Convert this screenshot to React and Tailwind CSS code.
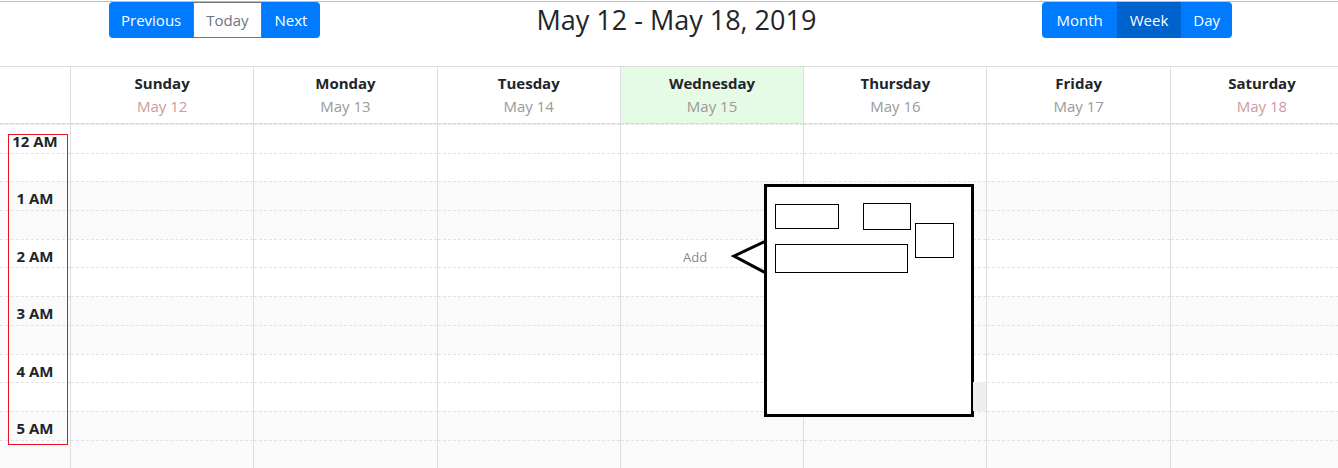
import React from "react";

const DAYS = [
  { name: "Sunday", date: "May 12", weekend: true },
  { name: "Monday", date: "May 13" },
  { name: "Tuesday", date: "May 14" },
  { name: "Wednesday", date: "May 15", today: true },
  { name: "Thursday", date: "May 16" },
  { name: "Friday", date: "May 17" },
  { name: "Saturday", date: "May 18", weekend: true },
];

const HOURS = ["12 AM", "1 AM", "2 AM", "3 AM", "4 AM", "5 AM"];

const COLS = "grid grid-cols-[70px_repeat(7,183.3px)]";

function Toolbar() {
  return (
    <div className="flex h-[64px] items-start pl-[109px] pr-[106px]">
      <div className="flex h-9 overflow-hidden rounded text-[15px]">
        <button className="bg-[#007bff] px-3 text-white">Previous</button>
        <button className="border border-[#6c757d] bg-white px-3 text-[#6c757d]">Today</button>
        <button className="bg-[#007bff] px-[13px] text-white">Next</button>
      </div>
      <h1 className="ml-[216px] h-9 text-[27px] leading-9 text-[#212529]">May 12 - May 18, 2019</h1>
      <div className="ml-auto flex h-9 overflow-hidden rounded text-[15px] text-white">
        <button className="bg-[#007bff] px-[14px]">Month</button>
        <button className="bg-[#0062cc] px-[13px]">Week</button>
        <button className="bg-[#007bff] px-3">Day</button>
      </div>
    </div>
  );
}

function DayHeader() {
  return (
    <div className={`${COLS} h-[58px] border-y border-[#dddddd]`}>
      <div />
      {DAYS.map((d) => (
        <div
          key={d.name}
          className={`flex flex-col items-center border-l border-[#dddddd] pt-[6px] ${d.today ? "bg-[#e6fbe6]" : ""}`}
        >
          <div className="text-[15px] font-bold leading-5 text-[#212529]">{d.name}</div>
          <div className={`mt-[3px] text-[15px] leading-5 ${d.weekend ? "text-[#cc9a9e]" : "text-[#9a9a9a]"}`}>{d.date}</div>
        </div>
      ))}
    </div>
  );
}

function HourRow({ label, i }) {
  const bg = i % 2 === 1 ? "bg-[#fafafa]" : "bg-white";
  return (
    <div className={`${COLS} h-[57.4px] ${bg}`}>
      <div className="flex flex-col">
        <div className="h-1/2 border-t border-dashed border-[#e2e2e2] pt-[6px] text-center text-[15px] font-bold leading-5 text-[#212529]">
          {label}
        </div>
        <div className="h-1/2 border-t border-dashed border-[#e2e2e2]" />
      </div>
      {DAYS.map((d) => (
        <div key={d.name} className="flex flex-col border-l border-[#dddddd]">
          <div className="h-1/2 border-t border-dashed border-[#e2e2e2]" />
          <div className="h-1/2 border-t border-dashed border-[#e2e2e2]" />
        </div>
      ))}
    </div>
  );
}

function Popover() {
  return (
    <>
      <div className="absolute left-[683px] top-[249px] text-[13px] leading-4 text-[#8a8a8a]">Add</div>
      <svg className="absolute left-[730px] top-[238px]" width="40" height="40" viewBox="0 0 40 40">
        <polyline points="36,3 4,18 36,35" fill="none" stroke="#000" strokeWidth="3" />
      </svg>
      <div className="absolute left-[764px] top-[184px] h-[233px] w-[210px] border-[3px] border-black bg-white">
        <div className="absolute left-[8px] top-[17px] h-[25px] w-[64px] border border-black" />
        <div className="absolute left-[96px] top-[16px] h-[27px] w-[48px] border border-black" />
        <div className="absolute left-[148px] top-[36px] h-[35px] w-[39px] border border-black" />
        <div className="absolute left-[8px] top-[57px] h-[29px] w-[133px] border border-black" />
      </div>
      <div className="absolute left-[973px] top-[382px] h-[29px] w-[13px] bg-[#eeeeee]" />
    </>
  );
}

export default function App() {
  return (
    <div className="relative h-[468px] w-[1338px] overflow-hidden bg-white font-['Open_Sans',sans-serif]">
      <div className="h-px" />
      <div className="h-px bg-[#bdbdbd]" />
      <Toolbar />
      <DayHeader />
      <div>
        {HOURS.map((h, i) => (
          <HourRow key={h} label={h} i={i} />
        ))}
      </div>
      <div className="absolute left-[8px] top-[134px] h-[311px] w-[60px] border border-[#e81123]" />
      <Popover />
    </div>
  );
}
